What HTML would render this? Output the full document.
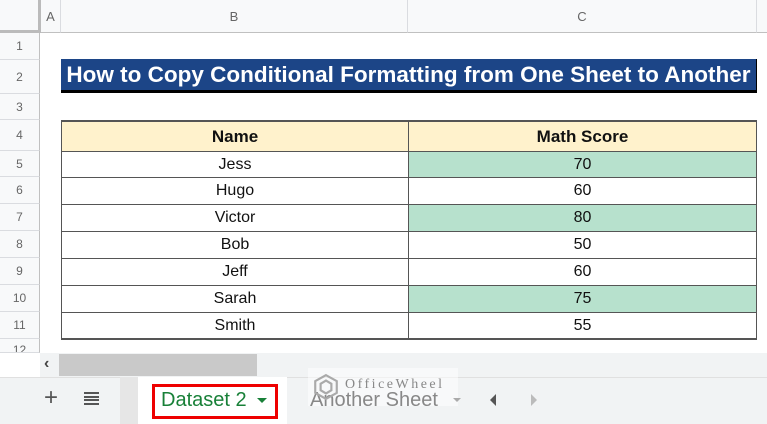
<!DOCTYPE html>
<html><head><meta charset="utf-8"><style>
*{margin:0;padding:0;box-sizing:border-box}
body{width:767px;height:424px;overflow:hidden;background:#fff;font-family:"Liberation Sans",Arial,sans-serif;position:relative}
.a{position:absolute}
.rh{position:absolute;left:0;width:40px;background:#f8f9fa;border-bottom:1px solid #dadce0;border-right:1px solid #c0c0c0;color:#666;font-size:12px;text-align:center}
.ch{position:absolute;top:0;height:33px;background:#f8f9fa;border-right:1px solid #dadce0;border-bottom:1px solid #c0c0c0;color:#666;font-size:13px;text-align:center;line-height:33px}
.cell{position:absolute;text-align:center;font-size:16px;color:#111;border:1px solid #555}
</style></head><body>
<div class="ch" style="left:0;width:41px;border-right:3px solid #bbb;border-bottom:3px solid #bbb"></div>
<div class="ch" style="left:41px;width:20px">A</div>
<div class="ch" style="left:61px;width:347px">B</div>
<div class="ch" style="left:408px;width:349px">C</div>
<div class="ch" style="left:757px;width:10px;border-right:none"></div>

<div class="rh" style="top:33px;height:27px;line-height:27px">1</div>
<div class="rh" style="top:60px;height:34px;line-height:34px">2</div>
<div class="rh" style="top:94px;height:26px;line-height:26px">3</div>
<div class="rh" style="top:120px;height:31px;line-height:31px">4</div>
<div class="rh" style="top:151px;height:26px;line-height:26px">5</div>
<div class="rh" style="top:177px;height:27px;line-height:27px">6</div>
<div class="rh" style="top:204px;height:27px;line-height:27px">7</div>
<div class="rh" style="top:231px;height:27px;line-height:27px">8</div>
<div class="rh" style="top:258px;height:27px;line-height:27px">9</div>
<div class="rh" style="top:285px;height:27px;line-height:27px">10</div>
<div class="rh" style="top:312px;height:27px;line-height:27px">11</div>
<div class="rh" style="top:339px;height:14px;line-height:22px;overflow:hidden">12</div>

<div class="a" style="left:61px;top:59px;width:696px;height:34px;background:#1c4587;border-bottom:3px solid #000;border-right:1px solid #000;color:#fff;font-weight:bold;font-size:22.5px;line-height:32px;text-align:center;white-space:nowrap">How to Copy Conditional Formatting from One Sheet to Another</div>

<div class="cell" style="left:61px;top:120px;width:348px;height:32px;background:#fff2cc;font-weight:bold;font-size:17px;line-height:30px;border-top-width:2px">Name</div>
<div class="cell" style="left:408px;top:120px;width:349px;height:32px;background:#fff2cc;font-weight:bold;font-size:17px;line-height:30px;border-top-width:2px">Math Score</div>

<div class="cell" style="left:61px;top:151px;width:348px;height:27px;line-height:25px">Jess</div>
<div class="cell" style="left:408px;top:151px;width:349px;height:27px;line-height:25px;background:#b7e1cd">70</div>
<div class="cell" style="left:61px;top:177px;width:348px;height:28px;line-height:26px">Hugo</div>
<div class="cell" style="left:408px;top:177px;width:349px;height:28px;line-height:26px">60</div>
<div class="cell" style="left:61px;top:204px;width:348px;height:28px;line-height:26px">Victor</div>
<div class="cell" style="left:408px;top:204px;width:349px;height:28px;line-height:26px;background:#b7e1cd">80</div>
<div class="cell" style="left:61px;top:231px;width:348px;height:28px;line-height:26px">Bob</div>
<div class="cell" style="left:408px;top:231px;width:349px;height:28px;line-height:26px">50</div>
<div class="cell" style="left:61px;top:258px;width:348px;height:28px;line-height:26px">Jeff</div>
<div class="cell" style="left:408px;top:258px;width:349px;height:28px;line-height:26px">60</div>
<div class="cell" style="left:61px;top:285px;width:348px;height:28px;line-height:26px">Sarah</div>
<div class="cell" style="left:408px;top:285px;width:349px;height:28px;line-height:26px;background:#b7e1cd">75</div>
<div class="cell" style="left:61px;top:312px;width:348px;height:28px;line-height:26px;border-bottom-width:2px">Smith</div>
<div class="cell" style="left:408px;top:312px;width:349px;height:28px;line-height:26px;border-bottom-width:2px">55</div>

<!-- scrollbar -->
<div class="a" style="left:0;top:353px;width:40px;height:24px;background:#fff"></div>
<div class="a" style="left:40px;top:353px;width:727px;height:24px;background:#f1f3f4"></div>
<div class="a" style="left:44px;top:355px;font-size:16px;color:#444;font-weight:bold">‹</div>
<div class="a" style="left:59px;top:354px;width:198px;height:22px;background:#c9c9c9"></div>

<!-- tab bar -->
<div class="a" style="left:0;top:377px;width:767px;height:47px;background:#f1f3f4;border-top:1px solid #e0e0e0"></div>
<div class="a" style="left:120px;top:377px;width:18px;height:47px;background:#e6e6e6"></div>
<div class="a" style="left:44px;top:384px;font-size:24px;color:#555">+</div>
<div class="a" style="left:84px;top:392px;width:15px;height:13px;border-top:2px solid #555;border-bottom:2px solid #555"><div style="margin-top:2px;height:5px;border-top:2px solid #555;border-bottom:2px solid #555"></div></div>
<div class="a" style="left:138px;top:377px;width:149px;height:47px;background:#fff"></div>
<div class="a" style="left:152px;top:384px;width:126px;height:35px;border:3px solid #e00;background:#fff"></div>
<div class="a" style="left:161px;top:389px;font-size:20px;color:#188038">Dataset 2</div>
<div class="a" style="left:257px;top:398px;width:0;height:0;border-left:5px solid transparent;border-right:5px solid transparent;border-top:5px solid #188038"></div>
<div class="a" style="left:308px;top:368px;width:150px;height:38px;background:rgba(255,255,255,0.5)"></div>
<div class="a" style="left:310px;top:389px;font-size:20px;color:#888">Another Sheet</div>
<div class="a" style="left:345px;top:377px;font-size:14px;color:#888;font-family:'Liberation Serif',serif;letter-spacing:2.5px">OfficeWheel</div>
<svg class="a" style="left:313px;top:373px" width="26" height="28" viewBox="0 0 24 26"><path d="M12 2 L22 7.5 L22 18.5 L12 24 L2 18.5 L2 7.5 Z M12 7 L17 10 L17 16 L12 19 L7 16 L7 10 Z" fill="none" stroke="#aaa" stroke-width="2"/></svg>
<div class="a" style="left:453px;top:398px;width:0;height:0;border-left:4px solid transparent;border-right:4px solid transparent;border-top:4px solid #aaa"></div>
<div class="a" style="left:490px;top:394px;width:0;height:0;border-top:6px solid transparent;border-bottom:6px solid transparent;border-right:6px solid #555"></div>
<div class="a" style="left:531px;top:394px;width:0;height:0;border-top:6px solid transparent;border-bottom:6px solid transparent;border-left:6px solid #bbb"></div>
</body></html>
